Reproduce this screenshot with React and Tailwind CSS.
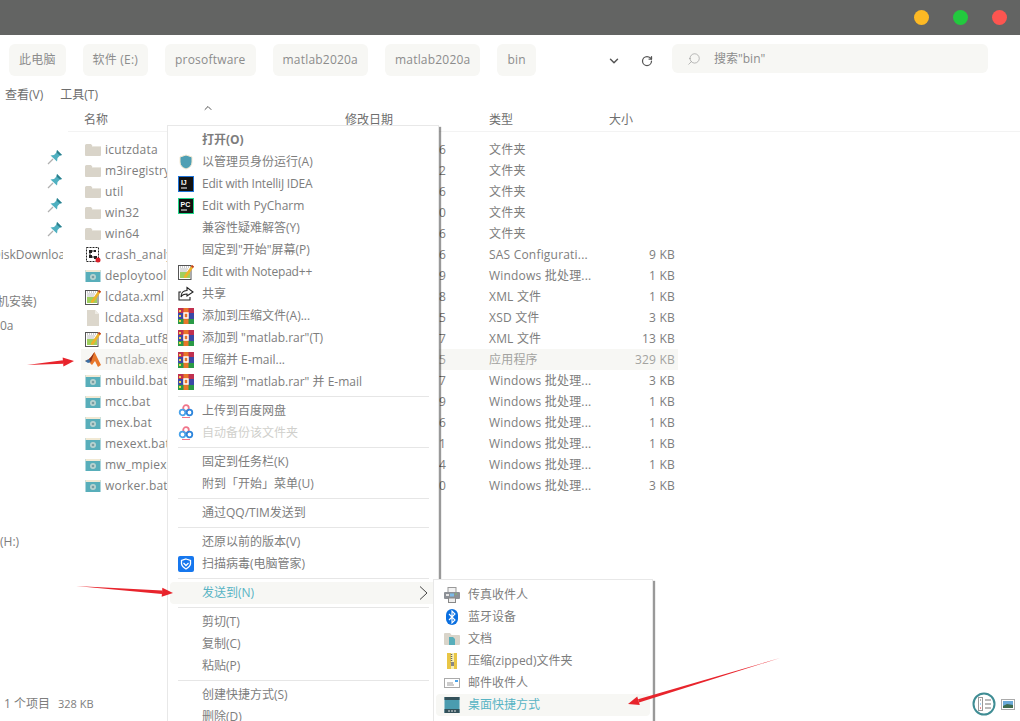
import React from 'react'
import { ChevronDown, ChevronUp, RotateCw, Search } from 'lucide-react'

// File list data
const rows = [
  { icon: 'folder', name: 'icutzdata', date: '2020/3/6', type: '文件夹', size: '' },
  { icon: 'folder', name: 'm3iregistry', date: '2020/3/2', type: '文件夹', size: '' },
  { icon: 'folder', name: 'util', date: '2020/3/6', type: '文件夹', size: '' },
  { icon: 'folder', name: 'win32', date: '2020/3/0', type: '文件夹', size: '' },
  { icon: 'folder', name: 'win64', date: '2020/3/6', type: '文件夹', size: '' },
  { icon: 'cfg', name: 'crash_analyzer.cfg', date: '2020/3/6', type: 'SAS Configurati...', size: '9 KB' },
  { icon: 'bat', name: 'deploytool.bat', date: '2020/3/9', type: 'Windows 批处理...', size: '1 KB' },
  { icon: 'note', name: 'lcdata.xml', date: '2020/3/8', type: 'XML 文件', size: '1 KB' },
  { icon: 'page', name: 'lcdata.xsd', date: '2020/3/5', type: 'XSD 文件', size: '3 KB' },
  { icon: 'note', name: 'lcdata_utf8.xml', date: '2020/3/7', type: 'XML 文件', size: '13 KB' },
  { icon: 'matlab', name: 'matlab.exe', date: '2020/3/5', type: '应用程序', size: '329 KB', active: true },
  { icon: 'bat', name: 'mbuild.bat', date: '2020/3/7', type: 'Windows 批处理...', size: '3 KB' },
  { icon: 'bat', name: 'mcc.bat', date: '2020/3/9', type: 'Windows 批处理...', size: '1 KB' },
  { icon: 'bat', name: 'mex.bat', date: '2020/3/6', type: 'Windows 批处理...', size: '1 KB' },
  { icon: 'bat', name: 'mexext.bat', date: '2020/3/1', type: 'Windows 批处理...', size: '1 KB' },
  { icon: 'bat', name: 'mw_mpiexec.bat', date: '2020/3/4', type: 'Windows 批处理...', size: '1 KB' },
  { icon: 'bat', name: 'worker.bat', date: '2020/3/0', type: 'Windows 批处理...', size: '3 KB' },
]

const crumbs = ['此电脑', '软件 (E:)', 'prosoftware', 'matlab2020a', 'matlab2020a', 'bin']

const menuGroups = [
  [
    { label: '打开(O)', bold: true },
    { label: '以管理员身份运行(A)', icon: 'shield' },
    { label: 'Edit with IntelliJ IDEA', icon: 'ij', tight: true },
    { label: 'Edit with PyCharm', icon: 'pc' },
    { label: '兼容性疑难解答(Y)' },
    { label: '固定到"开始"屏幕(P)' },
    { label: 'Edit with Notepad++', icon: 'note', tight: true },
    { label: '共享', icon: 'share' },
    { label: '添加到压缩文件(A)...', icon: 'rar' },
    { label: '添加到 "matlab.rar"(T)', icon: 'rar' },
    { label: '压缩并 E-mail...', icon: 'rar' },
    { label: '压缩到 "matlab.rar" 并 E-mail', icon: 'rar' },
  ],
  [
    { label: '上传到百度网盘', icon: 'baidu' },
    { label: '自动备份该文件夹', icon: 'baidu', muted: true },
  ],
  [{ label: '固定到任务栏(K)' }, { label: '附到「开始」菜单(U)' }],
  [{ label: '通过QQ/TIM发送到' }],
  [{ label: '还原以前的版本(V)' }, { label: '扫描病毒(电脑管家)', icon: 'guard' }],
  [{ label: '发送到(N)', active: true, sub: true }],
  [{ label: '剪切(T)' }, { label: '复制(C)' }, { label: '粘贴(P)' }],
  [{ label: '创建快捷方式(S)' }, { label: '删除(D)' }],
]

const sendTo = [
  { label: '传真收件人', icon: 'fax' },
  { label: '蓝牙设备', icon: 'bluetooth' },
  { label: '文档', icon: 'docs' },
  { label: '压缩(zipped)文件夹', icon: 'zip' },
  { label: '邮件收件人', icon: 'mail' },
  { label: '桌面快捷方式', icon: 'desktop', active: true },
]

const Icon = ({ name }) => {
  switch (name) {
    case 'folder':
      return (
        <svg width="16" height="16" viewBox="0 0 16 16">
          <path d="M0 3.500Q0 2 1.500 2H6l1.500 2H15q1 0 1 1v8q0 1-1 1H1q-1 0-1-1z" fill="#d9d4c9" />
          <path d="M7 4.500h9" stroke="#e9e6de" />
        </svg>
      )
    case 'bat':
      return (
        <svg width="16" height="16" viewBox="0 0 16 16">
          <rect x="0.500" y="2" width="15" height="12" fill="#58aeba" />
          <rect x="0.500" y="2" width="15" height="2" fill="#f1e9d4" />
          <circle cx="8" cy="9" r="3" fill="#b9d3d0" />
          <circle cx="8" cy="9" r="1.300" fill="#7b9ea3" />
        </svg>
      )
    case 'page':
      return (
        <svg width="16" height="16" viewBox="0 0 16 16">
          <path d="M2 0h8l4 4v12H2z" fill="#dcd7cc" />
          <path d="M10 0l4 4h-4z" fill="#eeebe4" />
        </svg>
      )
    case 'note':
      return (
        <svg width="16" height="16" viewBox="0 0 16 16">
          <rect x="0.500" y="1.500" width="12.500" height="14" fill="#fff" stroke="#555" />
          <path d="M2 3h10" stroke="#999" strokeDasharray="1 1" />
          <rect x="2" y="8" width="10" height="6" fill="#9fcf5f" />
          <path d="M2 5h8M2 7h7" stroke="#bbb" />
          <path d="M6 12L14 1l2 1.500L8.500 13.500 6 14z" fill="#eeb32b" />
          <path d="M14 1l2 1.500-1 1.500-2-1.500z" fill="#c0392b" />
        </svg>
      )
    case 'cfg':
      return (
        <svg width="16" height="16" viewBox="0 0 16 16">
          <rect x="1.500" y="0.500" width="12" height="14" fill="#fff" stroke="#222" strokeDasharray="2 1" />
          <path d="M4 3h3v3H4zM9 3h2v2H9zM4 8h3v3H4zM9 9h3v3H9z" fill="#222" />
          <path d="M5 6v2M7 4h2M7 10h2" stroke="#222" />
          <circle cx="13" cy="13" r="2.500" fill="#d7202a" />
        </svg>
      )
    case 'matlab':
      return (
        <svg width="16" height="16" viewBox="0 0 16 16">
          <path d="M0 9l4-2 2-2 3.500-5 6.500 13-3 2-3-6-3 4-3-3z" fill="#e8772b" />
          <path d="M0 9l4-2 2 3-3 1z" fill="#3a6ea5" />
          <path d="M4 7l2-2 3.500-5L7 7l-1 3z" fill="#8a2f1a" />
        </svg>
      )
    case 'shield':
      return (
        <svg width="16" height="16" viewBox="0 0 16 16">
          <path d="M8 1l6 2v5q0 5-6 7-6-2-6-7V3z" fill="#4f9fb4" stroke="#f3e9d2" />
        </svg>
      )
    case 'ij':
      return (
        <svg width="16" height="16" viewBox="0 0 16 16">
          <rect width="16" height="16" fill="#1f73d8" />
          <rect x="1" y="1" width="14" height="14" fill="#111" />
          <text x="3" y="9" fontSize="7" fontWeight="700" fill="#fff" fontFamily="Liberation Sans">IJ</text>
          <rect x="3" y="11.500" width="6" height="1" fill="#fff" />
        </svg>
      )
    case 'pc':
      return (
        <svg width="16" height="16" viewBox="0 0 16 16">
          <rect width="16" height="16" fill="#21d789" />
          <rect x="1" y="1" width="14" height="14" fill="#111" />
          <text x="2.500" y="9" fontSize="7" fontWeight="700" fill="#fff" fontFamily="Liberation Sans">PC</text>
          <rect x="3" y="11.500" width="6" height="1" fill="#fff" />
        </svg>
      )
    case 'share':
      return (
        <svg width="16" height="16" viewBox="0 0 16 16" fill="none" stroke="#222" strokeWidth="1.100">
          <path d="M3 6H1v8h11v-3" />
          <path d="M9 1.500l6 4.500-6 4V8C6 8 4 9 3 11c0-4 2-6.500 6-6.500z" />
        </svg>
      )
    case 'rar':
      return (
        <svg width="16" height="16" viewBox="0 0 16 16">
          <rect width="16" height="5" fill="#c0304f" />
          <rect y="5" width="16" height="6" fill="#3b48a6" />
          <rect y="11" width="16" height="5" fill="#2a9a46" />
          <rect x="1" y="2" width="2" height="2" fill="#f0d24a" />
          <rect x="1" y="7" width="2" height="2" fill="#f0d24a" />
          <rect x="1" y="12" width="2" height="2" fill="#f0d24a" />
          <rect x="5.500" width="5" height="16" fill="#e8762a" />
          <path d="M6 5h4v5H6z" fill="none" stroke="#fff" strokeWidth="1.400" />
        </svg>
      )
    case 'baidu':
      return (
        <svg width="16" height="16" viewBox="0 0 16 16" fill="none">
          <circle cx="8" cy="5" r="2.800" stroke="#f0758a" strokeWidth="1.800" />
          <circle cx="4.500" cy="9.500" r="2.800" stroke="#4aa3ea" strokeWidth="1.800" />
          <circle cx="11.500" cy="9.500" r="2.800" stroke="#2f86dc" strokeWidth="1.800" />
          <path d="M4 14.500h8" stroke="#f0758a" />
        </svg>
      )
    case 'guard':
      return (
        <svg width="16" height="16" viewBox="0 0 16 16">
          <rect width="16" height="16" rx="2" fill="#1677ee" />
          <path d="M8 3l4.500 1.500V8Q12 11 8 13 4 11 3.500 8V4.500z" fill="none" stroke="#fff" strokeWidth="1.300" />
          <path d="M5.500 7L8 9.500 10.500 7" fill="none" stroke="#fff" strokeWidth="1.300" />
        </svg>
      )
    case 'fax':
      return (
        <svg width="16" height="16" viewBox="0 0 16 16">
          <rect x="4" y="0.500" width="8" height="6" fill="#f2f2f2" stroke="#999" />
          <rect y="5" width="16" height="7" rx="1" fill="#8c9096" />
          <rect x="2" y="7" width="3" height="2" fill="#e5e5e5" />
          <rect x="6" y="6.500" width="4" height="3" fill="#7cbbe8" />
          <rect x="11" y="6.500" width="2" height="1" fill="#7ac06a" />
          <rect x="4.500" y="11" width="7" height="4.500" fill="#eee" stroke="#888" />
        </svg>
      )
    case 'bluetooth':
      return (
        <svg width="16" height="16" viewBox="0 0 16 16">
          <rect x="2" width="12" height="16" rx="6" fill="#0a6fe0" />
          <path d="M5 5l6 6-3 3V2l3 3-6 6" fill="none" stroke="#fff" strokeWidth="1.100" />
        </svg>
      )
    case 'docs':
      return (
        <svg width="16" height="16" viewBox="0 0 16 16">
          <path d="M0 3q0-1 1-1h5l1.500 2H15q1 0 1 1v8q0 1-1 1H1q-1 0-1-1z" fill="#d9d4c9" />
          <path d="M5 6h4l2 2v6H5z" fill="#58aeba" />
        </svg>
      )
    case 'zip':
      return (
        <svg width="16" height="16" viewBox="0 0 16 16">
          <rect x="3" width="10" height="16" fill="#e9c645" />
          <rect x="7" width="3" height="16" fill="#f6eeb5" />
          <path d="M7.500 1v9" stroke="#666" strokeDasharray="1 1" strokeWidth="1.500" />
          <rect x="7" y="9" width="3" height="4" fill="#888" />
        </svg>
      )
    case 'mail':
      return (
        <svg width="16" height="16" viewBox="0 0 16 16">
          <rect x="0.500" y="3.500" width="15" height="9" fill="#fff" stroke="#aaa" />
          <rect x="11" y="5" width="3" height="2" fill="#4aa3ea" />
          <path d="M3 8h6M3 10h7" stroke="#999" />
        </svg>
      )
    case 'desktop':
      return (
        <svg width="16" height="16" viewBox="0 0 16 16">
          <rect x="0.500" width="15" height="16" fill="#4b9cb0" />
          <rect x="0.500" width="15" height="3" fill="#33515a" />
          <rect x="0.500" y="12" width="15" height="4" fill="#33515a" />
          <path d="M4 14h2M7 14h2M10 14h2" stroke="#e5e5e5" />
        </svg>
      )
    default:
      return null
  }
}

const Pin = () => (
  <svg width="16" height="16" viewBox="0 0 16 16">
    <path d="M10 1l5 5-2 .5-2.500 2.500-.5 3.500L3.500 6.500 7 6l2.500-2.500z" fill="#4fb0c0" />
    <path d="M10 1l5 5-2 .5L9.500 3.500z" fill="#2c7f8c" />
    <path d="M6 10l-5 5" stroke="#b0b0b0" strokeWidth="1.200" />
  </svg>
)

const FileRow = ({ row }) => (
  <div className={`flex h-[21px] ml-[13px] w-[597px] items-center tracking-[0.2px] ${row.active ? 'bg-[#f7f7f4] text-[#a3a3a0]' : ''}`}>
    <div className="w-[24px] pl-[4px] flex items-center shrink-0"><Icon name={row.icon} /></div>
    <div className="w-[240px] shrink-0 whitespace-nowrap overflow-hidden">{row.name}</div>
    <div className="w-[101px] shrink-0 text-right">{row.date}</div>
    <div className="ml-[43px] w-[110px] shrink-0 whitespace-nowrap">{row.type}</div>
    <div className="w-[76px] shrink-0 text-right">{row.size}</div>
  </div>
)

const ContextMenu = () => (
  <div className="absolute left-[167px] top-[125px] w-[272px] h-[610px] bg-white border border-[#e8e8e8] shadow-[2px_2px_1px_rgba(0,0,0,0.4)] pt-[3px] px-[2px] flex flex-col">
    {menuGroups.map((group, i) => (
      <div key={i} className="flex flex-col">
        {i > 0 && <div className="h-[7px] flex items-center pl-[8px] pr-[7px]"><div className="h-px w-full bg-[#e6e6e6]" /></div>}
        {group.map((item) => (
          <div
            key={item.label}
            className={`h-[22px] flex items-center rounded shrink-0 ${item.active ? 'bg-[#f7f7f4] text-[#58b4c4]' : ''} ${item.muted ? 'text-[#d0d0cc]' : ''} ${item.bold ? 'font-bold' : ''} ${item.tight ? 'tracking-[-0.2px]' : ''}`}
          >
            <div className="w-[32px] pl-[8px] flex items-center shrink-0">{item.icon && <Icon name={item.icon} />}</div>
            <span className="flex-1 whitespace-nowrap">{item.label}</span>
            {item.sub && (
              <svg className="mr-[8px]" width="9" height="14" viewBox="0 0 9 14" fill="none" stroke="#444" strokeWidth="1">
                <path d="M1 0.500l7 6.500-7 6.500" />
              </svg>
            )}
          </div>
        ))}
      </div>
    ))}
  </div>
)

const SendToMenu = () => (
  <div className="absolute left-[433px] top-[579px] w-[220px] h-[155px] bg-white border border-[#e8e8e8] shadow-[2px_2px_1px_rgba(0,0,0,0.4)] pt-[4px] px-[2px] flex flex-col">
    {sendTo.map((item) => (
      <div key={item.label} className={`h-[22px] flex items-center rounded shrink-0 ${item.active ? 'bg-[#f7f7f4] text-[#58b4c4]' : ''}`}>
        <div className="w-[32px] pl-[8px] flex items-center shrink-0"><Icon name={item.icon} /></div>
        <span className="whitespace-nowrap">{item.label}</span>
      </div>
    ))}
  </div>
)

// Red hand-drawn arrows from the annotated screenshot
const Arrow = ({ x1, y1, x2, y2 }) => {
  const a = Math.atan2(y2 - y1, x2 - x1)
  const bx = x2 - Math.cos(a) * 11
  const by = y2 - Math.sin(a) * 11
  const nx = -Math.sin(a)
  const ny = Math.cos(a)
  return (
    <g fill="#e8242c">
      <polygon points={`${x1},${y1} ${bx + nx * 1.7},${by + ny * 1.7} ${bx - nx * 1.7},${by - ny * 1.7}`} />
      <polygon points={`${x2},${y2} ${bx + nx * 4.5},${by + ny * 4.5} ${bx - nx * 4.5},${by - ny * 4.5}`} />
    </g>
  )
}

function App() {
  return (
    <div className="relative w-[1020px] h-[721px] overflow-hidden bg-white flex flex-col text-[12px] text-[#7d7d7d] font-['Open_Sans','Noto_Sans_CJK_SC',sans-serif]">
      {/* Title bar */}
      <div className="h-[35px] shrink-0 bg-[#636463] flex items-center justify-end gap-[24px] pr-[13px]">
        <div className="w-[15px] h-[15px] rounded-full bg-[#fdb924]" />
        <div className="w-[15px] h-[15px] rounded-full bg-[#22c93e]" />
        <div className="w-[15px] h-[15px] rounded-full bg-[#fd5550]" />
      </div>

      {/* Breadcrumb and search */}
      <div className="h-[32px] mt-[9px] shrink-0 flex items-start pl-[9px]">
        <div className="flex gap-[17px] w-[596px]">
          {crumbs.map((c, i) => (
            <div key={i} className="h-[32px] px-[10px] rounded-md bg-[#f7f7f4] flex items-center whitespace-nowrap tracking-[0.2px] text-[#8c8c8c]">{c}</div>
          ))}
        </div>
        <ChevronDown className="w-[14px] h-[14px] mt-[10px] ml-[2px] text-[#555]" strokeWidth={2.500} />
        <RotateCw className="w-[12px] h-[12px] mt-[11px] ml-[20px] text-[#555]" strokeWidth={2.500} />
        <div className="ml-[19px] w-[316px] h-[29px] rounded-md bg-[#f7f7f4] flex items-center pl-[15px] gap-[13px] text-[#8c8c8c]">
          <Search className="w-[14px] h-[14px] -scale-x-100 text-[#8c8c8c]" strokeWidth={1} />
          <span>搜索"bin"</span>
        </div>
      </div>

      {/* Menu bar */}
      <div className="h-[20px] mt-[8px] pt-[2px] shrink-0 flex items-center pl-[5px] gap-[17px] text-[#6e6e6e]">
        <span>查看(V)</span>
        <span>工具(T)</span>
      </div>

      {/* Body */}
      <div className="flex-1 flex min-h-0">
        <div className="w-[68px] shrink-0 overflow-hidden flex flex-col pt-[41px] whitespace-nowrap">
          {[0, 1, 2, 3].map((i) => (
            <div key={i} className="h-[24px] flex items-center justify-end pr-[5px]"><Pin /></div>
          ))}
          <div className="h-[24px] mt-[2px] -ml-[8px] mr-[5px] overflow-hidden flex items-center">DiskDownload</div>
          <div className="h-[24px] mt-[23px] -ml-[3px] flex items-center">机安装)</div>
          <div className="h-[24px] flex items-center">0a</div>
          <div className="h-[24px] mt-[192px] flex items-center">(H:)</div>
        </div>
        <div className="flex-1 flex flex-col">
          <div className="h-[28px] shrink-0 border-b border-[#f3f3f3] flex items-center pt-[5px] text-[#6e6e6e]">
            <span className="ml-[16px] w-[261px]">名称</span>
            <span className="w-[144px]">修改日期</span>
            <span className="w-[120px]">类型</span>
            <span>大小</span>
          </div>
          <div className="mt-[7px] flex flex-col">
            {rows.map((row) => <FileRow key={row.name} row={row} />)}
          </div>
        </div>
      </div>

      {/* Status bar */}
      <div className="h-[36px] shrink-0 flex items-center pl-[4px] pt-[2px]">
        <span className="w-[54px]">1 个项目</span>
        <span className="text-[11px]">328 KB</span>
        <div className="ml-auto mr-[5px] flex items-center gap-[5px]">
          <svg width="24" height="24" viewBox="0 0 24 24" fill="none">
            <circle cx="12" cy="12" r="10.500" stroke="#3f8d94" strokeWidth="2" />
            <rect x="6.500" y="5.500" width="4" height="13" stroke="#999" />
            <path d="M13 8h6M13 12h6M13 16h6" stroke="#777" />
            <path d="M8 8h1" stroke="#666" />
            <path d="M8 12h1" stroke="#4aa3ea" />
            <path d="M8 16h1" stroke="#d7202a" />
          </svg>
          <svg width="14" height="11" viewBox="0 0 14 11">
            <rect x="0.500" y="0.500" width="13" height="10" fill="#fff" stroke="#aaa" />
            <rect x="2" y="2" width="10" height="7" fill="#6aa9d8" />
            <path d="M2 7l4-2 6 1v3H2z" fill="#3f6b4f" />
          </svg>
        </div>
      </div>

      {/* Sort caret sits over the header */}
      <ChevronUp className="absolute left-[202px] top-[102px] w-[12px] h-[12px] text-[#555]" strokeWidth={2} />

      <ContextMenu />
      <SendToMenu />

      <svg className="absolute inset-0 pointer-events-none" width="1020" height="721">
        <Arrow x1={27} y1={365} x2={74} y2={361} />
        <Arrow x1={76} y1={586} x2={173} y2={593} />
        <Arrow x1={780} y1={658} x2={628} y2={704} />
      </svg>
    </div>
  )
}

export default App
